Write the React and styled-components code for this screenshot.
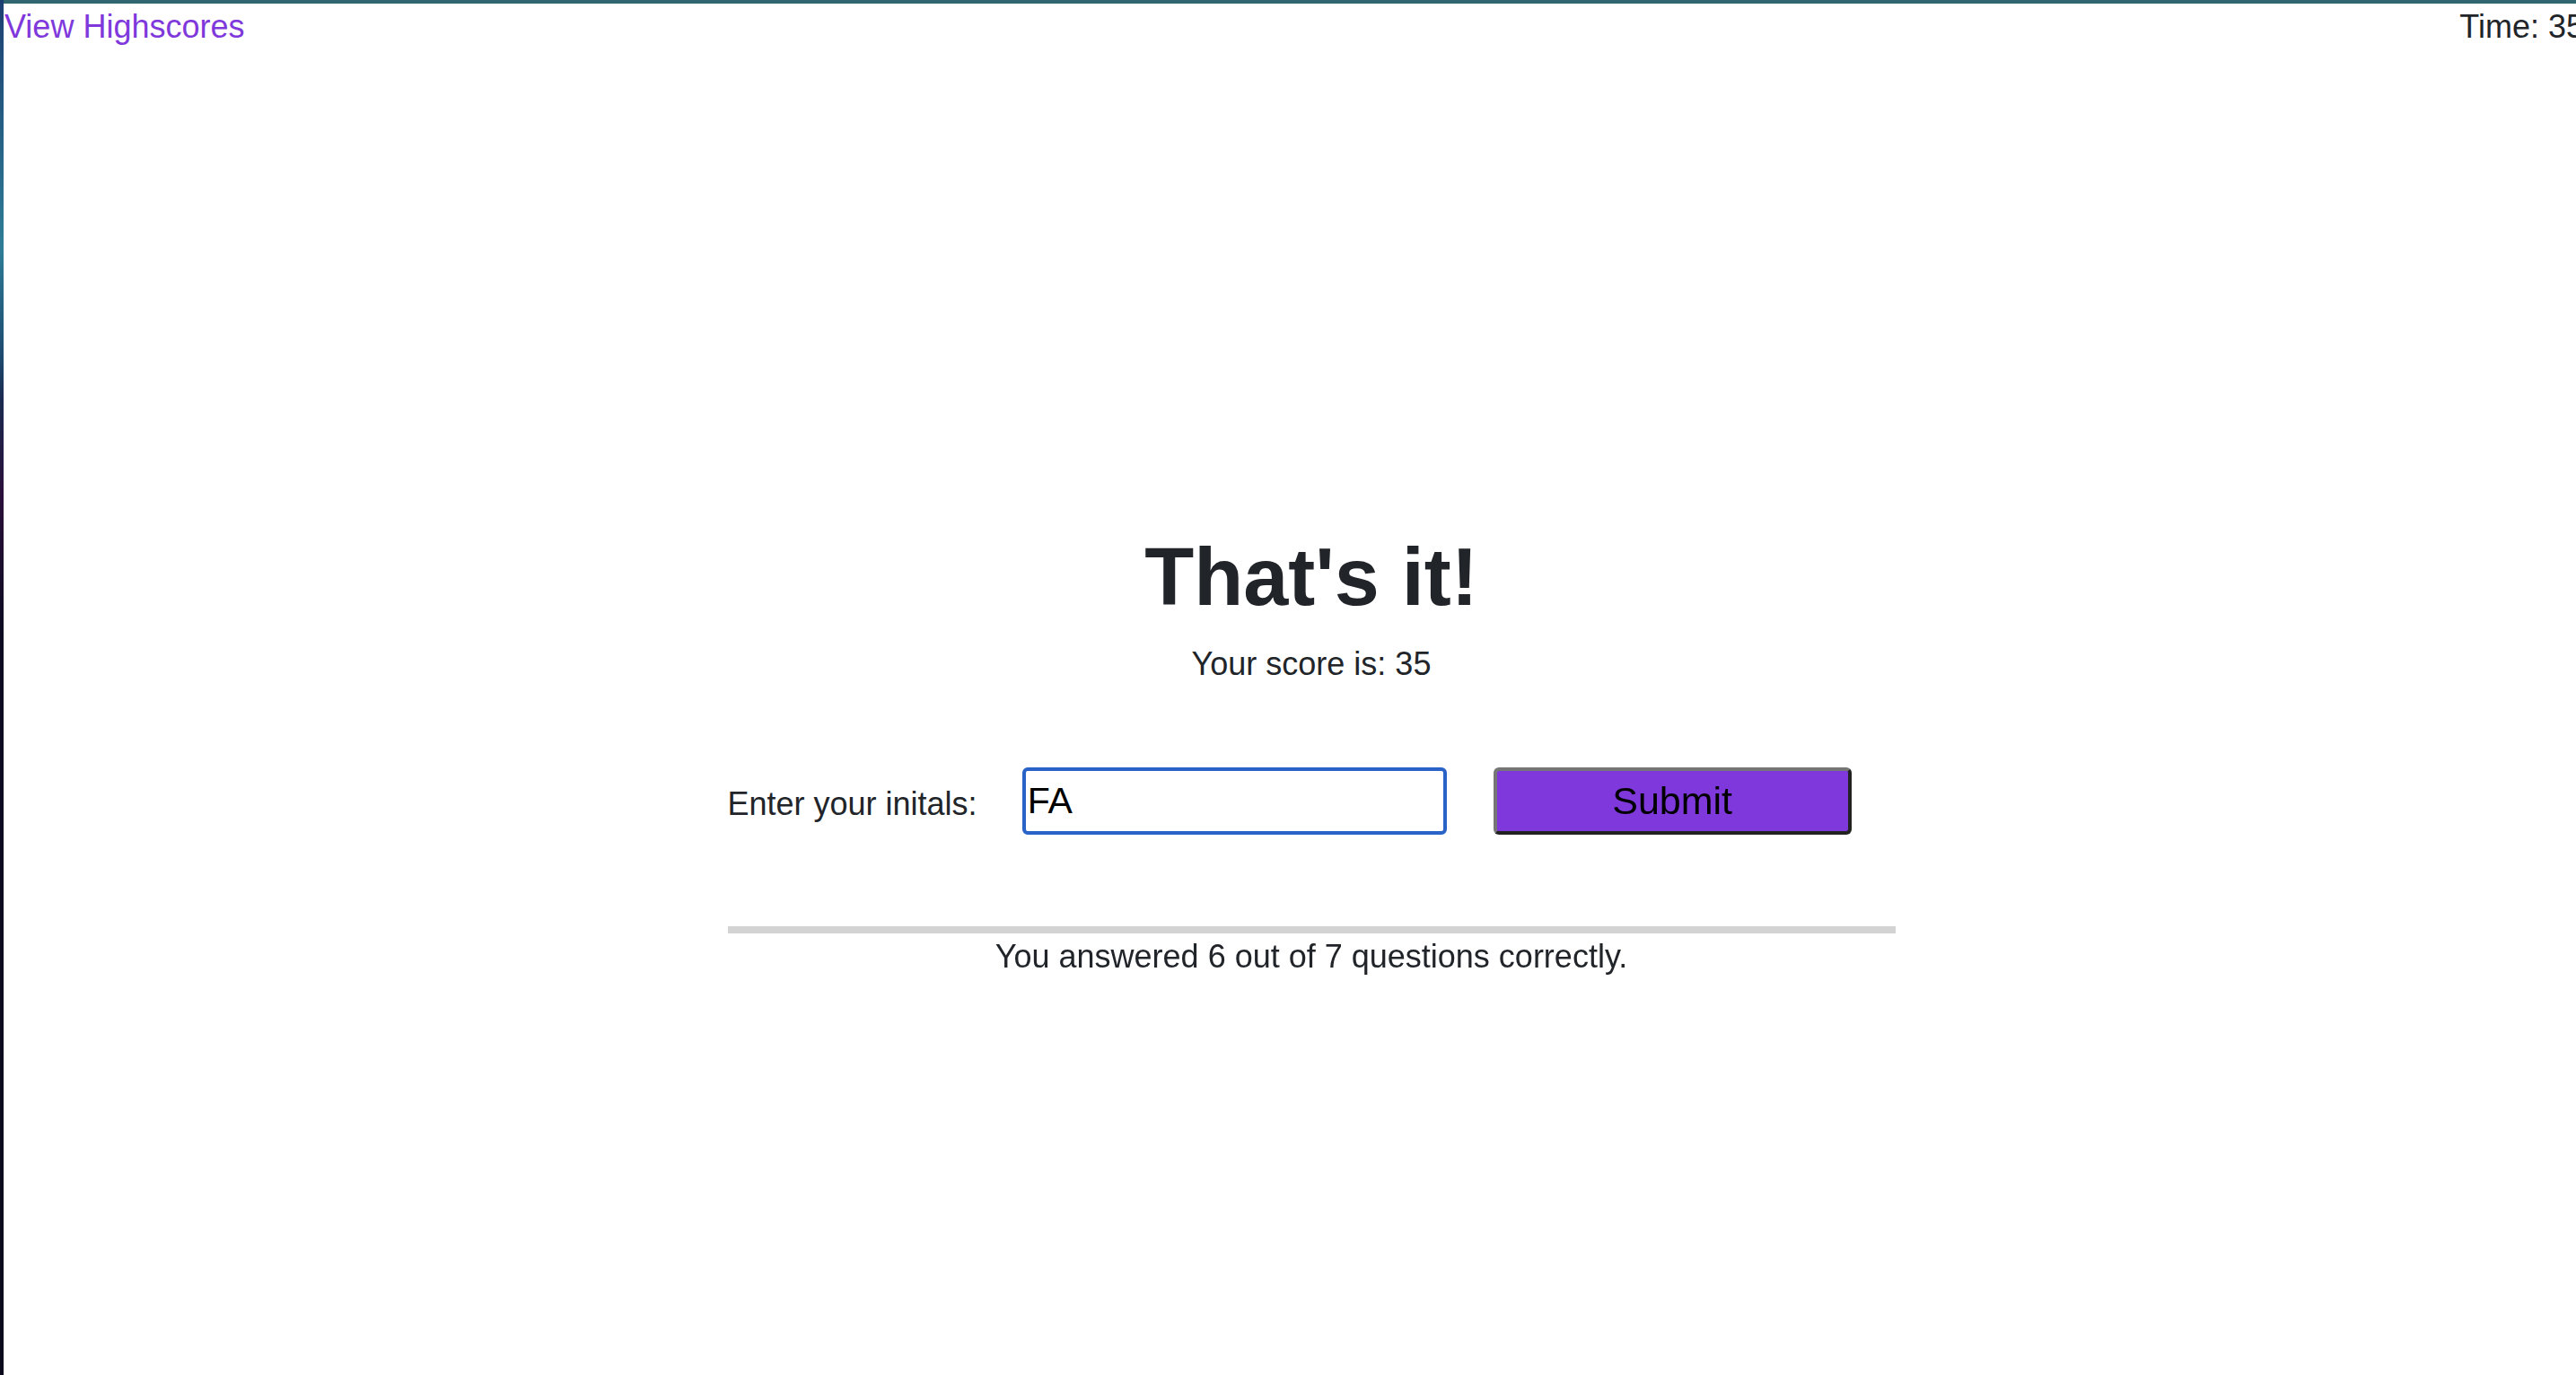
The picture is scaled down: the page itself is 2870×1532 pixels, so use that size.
import React from 'react';
import styled, { createGlobalStyle } from 'styled-components';

const GlobalStyle = createGlobalStyle`
  html, body {
    margin: 0;
    padding: 0;
    overflow: hidden;
    background: #ffffff;
  }
  body {
    font-family: "Liberation Sans", Arial, Helvetica, sans-serif;
    color: #212529;
  }
`;

const Frame = styled.div`
  display: flex;
  height: 1532px;
  width: 2918px;
`;

const WindowEdge = styled.div`
  width: 4px;
  flex-shrink: 0;
  background: linear-gradient(
    180deg,
    #1c3f72 0%,
    #2e7d96 18%,
    #1d4a6e 26%,
    #1a2a50 29%,
    #2a0f3a 36%,
    #0c0b22 46%,
    #0a0a1c 100%
  );
`;

const Page = styled.div`
  flex: 1;
  display: flex;
  flex-direction: column;
  border-top: 4px solid #2f6670;
  background: #ffffff;
  border-bottom-left-radius: 14px;
`;

const TopBar = styled.header`
  display: flex;
  justify-content: space-between;
  align-items: flex-start;
  padding: 0 39px 0 1px;
  font-size: 36px;
  line-height: 52.8px;
`;

const HighscoresLink = styled.a`
  color: #7f38db;
  text-decoration: none;
  cursor: pointer;
`;

const Timer = styled.span`
  color: #212529;
`;

const Results = styled.main`
  width: 1301px;
  margin: 534px auto 0;
  text-align: center;
`;

const Heading = styled.h1`
  margin: 0;
  font-size: 90px;
  line-height: 105.6px;
  font-weight: 700;
  color: #212529;
`;

const Line = styled.p`
  margin: ${(p) => p.$gap || 0}px 0 0;
  font-size: 36px;
  line-height: 52.8px;
  color: #212529;
`;

const InitialsForm = styled.form`
  display: flex;
  align-items: center;
  height: 75px;
  margin-top: 88px;
`;

const Label = styled.label`
  font-size: 36px;
  line-height: 52.8px;
  margin: 7px 50px 0 0;
  white-space: nowrap;
`;

const InitialsInput = styled.input`
  box-sizing: border-box;
  width: 473px;
  height: 75px;
  padding: 0 0 0 2px;
  border: 4px solid #2a63c8;
  border-radius: 6px;
  outline: none;
  font-family: "Liberation Sans", Arial, sans-serif;
  font-size: 41px;
  color: #000000;
  caret-color: #000000;
  background: #ffffff;
`;

const SubmitButton = styled.button`
  box-sizing: border-box;
  width: 399px;
  height: 75px;
  margin-left: 52px;
  border: 4px solid;
  border-color: #767676 #222222 #222222 #767676;
  border-radius: 6px;
  background: #7f38db;
  color: #000000;
  font-family: "Liberation Sans", Arial, sans-serif;
  font-size: 43px;
  padding: 0;
  cursor: pointer;
`;

const Divider = styled.hr`
  margin: 102px 0 0;
  height: 8px;
  border: none;
  background: #d3d3d3;
  opacity: 1;
`;

const App = () => {
  return (
    <>
      <GlobalStyle />
      <Frame>
        <WindowEdge />
        <Page>
          <TopBar>
            <HighscoresLink>View Highscores</HighscoresLink>
            <Timer>Time: 35</Timer>
          </TopBar>

          <Results>
            <Heading>That's it!</Heading>
            <Line $gap={18}>Your score is: 35</Line>

            <InitialsForm onSubmit={(e) => e.preventDefault()}>
              <Label htmlFor="initials">Enter your initals:</Label>
              <InitialsInput id="initials" type="text" defaultValue="FA" autoFocus />
              <SubmitButton type="submit">Submit</SubmitButton>
            </InitialsForm>

            <Divider />
            <Line>You answered 6 out of 7 questions correctly.</Line>
          </Results>
        </Page>
      </Frame>
    </>
  );
};

export default App;
